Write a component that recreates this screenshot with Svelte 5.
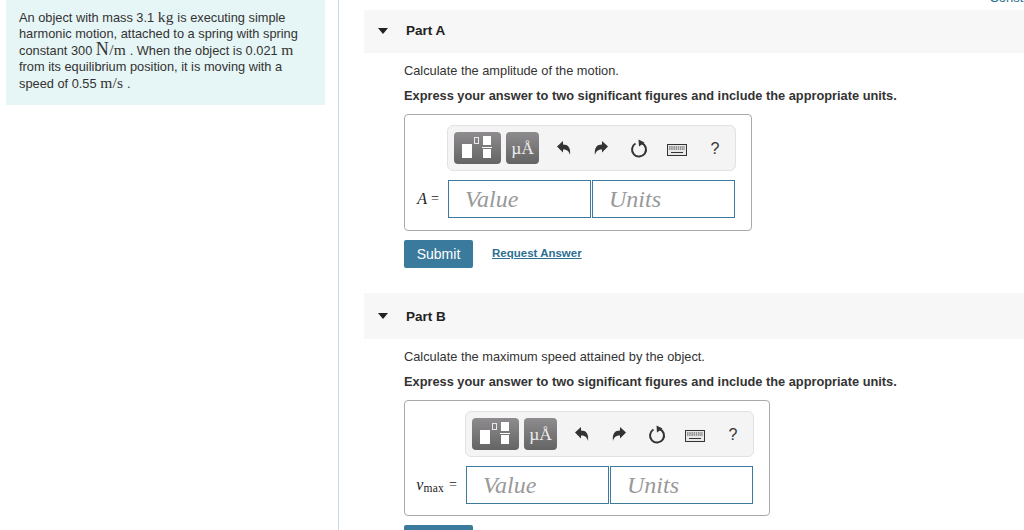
<script>
  const parts = [
    {
      name: 'Part A',
      question: 'Calculate the amplitude of the motion.',
      indent: 0
    },
    {
      name: 'Part B',
      question: 'Calculate the maximum speed attained by the object.',
      indent: 18
    }
  ];
</script>

{#snippet toolbar()}
  <div class="toolbar">
    <div class="tool-btn templates">
      <svg width="47" height="32" viewBox="0 0 47 32">
        <rect x="8" y="12" width="10" height="14" fill="#fff" />
        <rect x="20.5" y="5.5" width="4" height="6" fill="none" stroke="#e8e8e8" />
        <rect x="29" y="4" width="8" height="9" fill="#fff" />
        <rect x="28" y="15" width="10" height="1" fill="#fff" />
        <rect x="29" y="17" width="8" height="9" fill="#fff" />
      </svg>
    </div>
    <div class="tool-btn units">µÅ</div>
    <div class="tool-icons">
      <svg width="38" height="22" viewBox="0 0 38 22">
        <path d="M13 8.500 L19 3 V6.500 C24 6.500 27 9.500 26 17 C25 13 23 11.500 19 11.500 V14.500 Z" fill="#333" />
      </svg>
      <svg width="38" height="22" viewBox="0 0 38 22">
        <path d="M26 8.500 L20 3 V6.500 C15 6.500 12 9.500 13 17 C14 13 16 11.500 20 11.500 V14.500 Z" fill="#333" />
      </svg>
      <svg width="38" height="22" viewBox="0 0 38 22">
        <path d="M15.500 5.500 A7 7 0 1 0 21.500 5" fill="none" stroke="#333" stroke-width="2" />
        <path d="M18.500 1.500 L24.500 4.500 L19 8.500 Z" fill="#333" />
      </svg>
      <svg width="38" height="22" viewBox="0 0 38 22">
        <rect x="9.500" y="6.500" width="19" height="11" fill="#e8e8e8" stroke="#333" />
        <path d="M11 9 H27 M11 11 H27" stroke="#444" stroke-dasharray="1.500 0.700" />
        <path d="M13 14.500 H25" stroke="#333" />
      </svg>
      <span class="help">?</span>
    </div>
  </div>
{/snippet}

<div class="page">
  <aside class="left">
    <div class="problem">
      An object with mass 3.1 <span class="math">kg</span> is executing simple harmonic motion, attached to a spring with spring constant 300 <span class="math"><span class="big">N</span>/m</span> . When the object is 0.021 <span class="math">m</span> from its equilibrium position, it is moving with a speed of 0.55 <span class="math">m/s</span> .
    </div>
  </aside>

  <main class="right">
    <a class="constants" href="#top">Constants</a>

    {#each parts as part, i}
      <section class="part" class:second={i === 1}>
        <header class="part-head">
          <span class="caret"></span>
          <span class="part-name">{part.name}</span>
        </header>
        <div class="part-body">
          <p class="question">{part.question}</p>
          <p class="instruction">Express your answer to two significant figures and include the appropriate units.</p>

          <div class="answer" class:wide={part.indent > 0}>
            <div class="answer-grid">
              <div></div>
              {@render toolbar()}
              <div class="var">
                {#if i === 0}
                  <i>A</i> <span class="eq">=</span>
                {:else}
                  <i>v</i><sub>max</sub> <span class="eq">=</span>
                {/if}
              </div>
              <div class="inputs">
                <div class="field">Value</div>
                <div class="field">Units</div>
              </div>
            </div>
          </div>

          <div class="actions">
            <button class="submit">Submit</button>
            {#if i === 0}
              <a class="request" href="#top">Request Answer</a>
            {/if}
          </div>
        </div>
      </section>
    {/each}
  </main>
</div>

<style>
  :global(body) {
    margin: 0;
    background: #fff;
  }

  .page {
    display: flex;
    height: 530px;
    overflow: hidden;
    font-family: "Liberation Sans", Arial, sans-serif;
    color: #333;
    font-size: 13px;
  }

  .left {
    box-sizing: border-box;
    width: 339px;
    flex: none;
    padding-left: 6px;
    border-right: 1px solid #c6d9e8;
  }

  .problem {
    box-sizing: border-box;
    width: 319px;
    height: 105px;
    padding: 9.5px 13px;
    background: #e6f5f5;
    font-size: 12.8px;
    line-height: 16.5px;
  }

  .math {
    font-family: "Liberation Serif", serif;
    font-size: 15.5px;
    letter-spacing: 0.3px;
    line-height: 0;
  }

  .big {
    font-size: 18px;
  }

  .right {
    position: relative;
    flex: 1;
    min-width: 0;
    padding: 10px 0 0 25px;
  }

  .constants {
    position: absolute;
    right: -24px;
    top: -10px;
    font-size: 13px;
    line-height: 16px;
    color: #2d6f91;
    text-decoration: none;
  }

  .part.second {
    margin-top: 25px;
  }

  .part-head {
    display: flex;
    align-items: center;
    height: 43px;
    background: #f7f7f7;
    padding-left: 14px;
  }

  .second .part-head {
    height: 46px;
  }

  .caret {
    width: 0;
    height: 0;
    border-left: 5px solid transparent;
    border-right: 5px solid transparent;
    border-top: 6px solid #222;
    margin-right: 18px;
    margin-top: -1px;
  }

  .part-name {
    font-weight: bold;
    font-size: 13.500px;
    color: #222;
    margin-top: -3px;
  }

  .second .part-name {
    margin-top: 0;
  }

  .part-body {
    padding-left: 40px;
  }

  .question {
    margin: 10px 0 0;
    font-size: 12.8px;
    line-height: 15px;
  }

  .instruction {
    margin: 10px 0 0;
    font-size: 12.8px;
    line-height: 15px;
    font-weight: bold;
  }

  .answer {
    box-sizing: border-box;
    width: 348px;
    height: 117px;
    margin-top: 11px;
    border: 1px solid #aaa;
    border-radius: 4px;
    padding: 10px 15px 0 0;
  }

  .answer.wide {
    width: 366px;
    height: 116px;
  }

  .answer-grid {
    display: grid;
    grid-template-columns: 43px 287px;
    row-gap: 9px;
    justify-content: start;
  }

  .wide .answer-grid {
    grid-template-columns: 61px 287px;
  }

  .toolbar {
    box-sizing: border-box;
    display: flex;
    align-items: center;
    width: 289px;
    height: 46px;
    margin-left: -1px;
    padding-left: 6px;
    background: #f4f4f4;
    border: 1px solid #e2e2e2;
    border-radius: 6px;
  }

  .tool-btn {
    box-sizing: border-box;
    height: 32px;
    display: flex;
    align-items: center;
    justify-content: center;
    border-radius: 4px;
    background: linear-gradient(#8e8c8e, #656465);
    color: #eee;
  }

  .templates {
    width: 47px;
  }

  .units {
    width: 33px;
    margin-left: 5px;
    font-family: "Liberation Serif", serif;
    font-size: 17.500px;
  }

  .tool-icons {
    display: flex;
    align-items: center;
    margin: 2px 0 0 5px;
  }

  .help {
    width: 38px;
    text-align: center;
    font-size: 16px;
    color: #333;
  }

  .var {
    display: flex;
    align-items: center;
    justify-content: flex-end;
    gap: 4px;
    padding-right: 9px;
    font-family: "Liberation Serif", serif;
    font-size: 16px;
    color: #222;
    white-space: pre;
  }

  .var sub {
    font-size: 11.500px;
    letter-spacing: 0.3px;
    align-self: flex-end;
    margin: 0 1px 10px -4px;
  }

  .eq {
    font-size: 14px;
  }

  .inputs {
    display: flex;
    gap: 1px;
  }

  .field {
    box-sizing: border-box;
    width: 143px;
    height: 38px;
    padding-left: 16px;
    border: 1px solid #3b7a9c;
    font-family: "Liberation Serif", serif;
    font-style: italic;
    font-size: 24px;
    line-height: 36px;
    color: #999;
  }

  .actions {
    display: flex;
    align-items: center;
    gap: 19px;
    margin-top: 9px;
  }

  .submit {
    width: 69px;
    height: 28px;
    padding: 0;
    border: none;
    border-radius: 2px;
    background: #3a7a9c;
    color: #fff;
    font-family: inherit;
    font-size: 14px;
  }

  .request {
    font-size: 11.500px;
    font-weight: bold;
    color: #2d6f91;
    margin-top: -2px;
  }
</style>
